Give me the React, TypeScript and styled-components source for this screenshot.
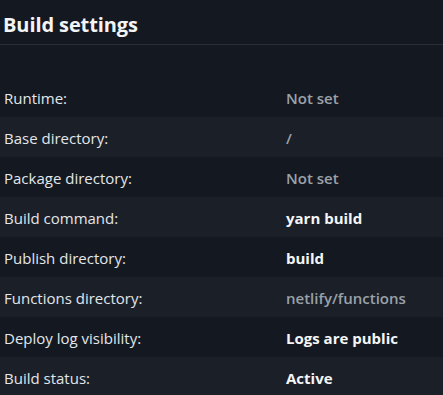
import React from "react";
import styled, { createGlobalStyle } from "styled-components";

const GlobalStyle = createGlobalStyle`
  html, body {
    margin: 0;
    padding: 0;
    background: #141921;
  }
  body {
    font-family: "Open Sans", "Noto Sans", sans-serif;
    color: #e6e8eb;
  }
`;

interface Setting {
  label: string;
  value: string;
  muted?: boolean;
}

const settings: Setting[] = [
  { label: "Runtime:", value: "Not set", muted: true },
  { label: "Base directory:", value: "/", muted: true },
  { label: "Package directory:", value: "Not set", muted: true },
  { label: "Build command:", value: "yarn build" },
  { label: "Publish directory:", value: "build" },
  { label: "Functions directory:", value: "netlify/functions", muted: true },
  { label: "Deploy log visibility:", value: "Logs are public" },
  { label: "Build status:", value: "Active" },
];

const Panel = styled.section`
  width: 443px;
  height: 395px;
  overflow: hidden;
  background: #141921;
`;

const Header = styled.header`
  height: 45px;
  border-bottom: 1px solid #2a2f37;
  padding: 11px 0 0 3px;
  box-sizing: border-box;
`;

const Title = styled.h2`
  margin: 0;
  font-size: 20px;
  line-height: 28px;
  font-weight: 700;
  color: #f2f4f6;
  letter-spacing: -0.1px;
`;

const List = styled.dl`
  margin: 32px 0 0;
  display: flex;
  flex-direction: column;
`;

const Row = styled.div<{ $alt: boolean }>`
  height: 40px;
  display: grid;
  grid-template-columns: 282px 1fr;
  align-items: center;
  padding: 2px 0 0 4px;
  box-sizing: border-box;
  background: ${(p) => (p.$alt ? "#1a1f28" : "#141921")};
`;

const Label = styled.dt`
  font-size: 15px;
  color: #e3e6ea;
`;

const Value = styled.dd<{ $muted?: boolean }>`
  margin: 0;
  font-size: 15px;
  font-weight: ${(p) => (p.$muted ? 600 : 700)};
  color: ${(p) => (p.$muted ? "#9ba1a9" : "#f4f5f7")};
`;

const App = () => {
  return (
    <>
      <GlobalStyle />
      <Panel>
        <Header>
          <Title>Build settings</Title>
        </Header>
        <List>
          {settings.map((s, i) => (
            <Row key={s.label} $alt={i % 2 === 1}>
              <Label>{s.label}</Label>
              <Value $muted={s.muted}>{s.value}</Value>
            </Row>
          ))}
        </List>
      </Panel>
    </>
  );
};

export default App;
